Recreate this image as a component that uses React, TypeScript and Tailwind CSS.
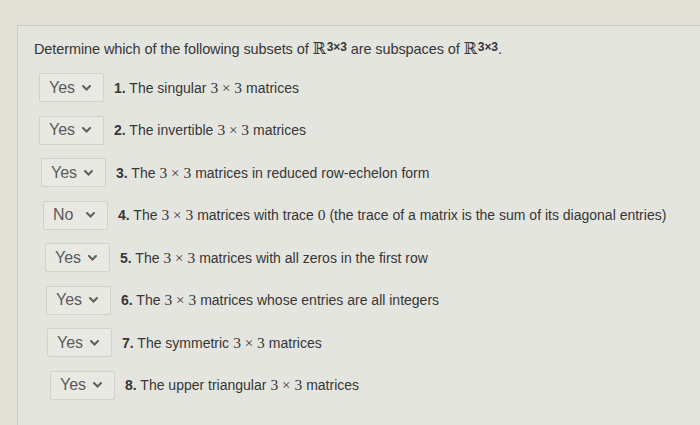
import type { ReactElement, ReactNode } from "react";

type Row = {
  answer: string;
  num: string;
  body: ReactNode;
  shift: string;
};

function Dim(): ReactElement {
  return (
    <span className="font-['Liberation_Serif',serif] text-[15.5px] mx-[4px]">
      3 <span className="text-[15px]">×</span> 3
    </span>
  );
}

function Reals(): ReactElement {
  return (
    <span className="font-['DejaVu_Serif',serif] text-[16px] ml-[4px]">
      ℝ
      <sup className="font-['Liberation_Sans',sans-serif] text-[12px] font-bold relative -top-[3px] ml-[1px]">
        3×3
      </sup>
    </span>
  );
}

const rows: Row[] = [
  { answer: "Yes", num: "1.", shift: "ml-[5px]", body: <>The singular<Dim />matrices</> },
  { answer: "Yes", num: "2.", shift: "ml-[5px]", body: <>The invertible<Dim />matrices</> },
  { answer: "Yes", num: "3.", shift: "ml-[7px]", body: <>The<Dim />matrices in reduced row-echelon form</> },
  {
    answer: "No",
    num: "4.",
    shift: "ml-[9px]",
    body: (
      <>
        The<Dim />matrices with trace{" "}
        <span className="font-['Liberation_Serif',serif] text-[15.5px]">0</span> (the trace of a matrix is the sum of its
        diagonal entries)
      </>
    ),
  },
  { answer: "Yes", num: "5.", shift: "ml-[11px]", body: <>The<Dim />matrices with all zeros in the first row</> },
  { answer: "Yes", num: "6.", shift: "ml-[12px]", body: <>The<Dim />matrices whose entries are all integers</> },
  { answer: "Yes", num: "7.", shift: "ml-[13px]", body: <>The symmetric<Dim />matrices</> },
  { answer: "Yes", num: "8.", shift: "ml-[16px]", body: <>The upper triangular<Dim />matrices</> },
];

function Chevron(): ReactElement {
  return (
    <svg width="9" height="6" viewBox="0 0 9 6" className="shrink-0">
      <path d="M1 1 L4.5 4.5 L8 1" fill="none" stroke="#5e5e5e" strokeWidth="2" strokeLinecap="round" />
    </svg>
  );
}

function AnswerSelect({ value }: { value: string }): ReactElement {
  return (
    <div className="w-[65px] h-[29px] shrink-0 flex items-center justify-between pl-[9px] pr-[12px] border border-[#d2d2ca] bg-[#e9e9e4] rounded-[2px]">
      <span className="text-[16px] text-[#5a5a5a]">{value}</span>
      <Chevron />
    </div>
  );
}

export default function App(): ReactElement {
  return (
    <div className="w-[700px] h-[425px] overflow-hidden bg-[#e3e1d7] pt-[25px] pl-[17px] font-['Liberation_Sans',Arial,sans-serif] text-[#363636]">
      <div className="h-full border-t border-l border-[#cecdc5] bg-[#e5e5e0] pl-[16px] pt-[13px]">
        <p className="text-[14.5px] leading-[20px] tracking-[-0.1px]">
          Determine which of the following subsets of
          <Reals /> are subspaces of
          <Reals />.
        </p>
        <div className="mt-[14px] flex flex-col gap-[13.5px]">
          {rows.map((row) => (
            <div key={row.num} className={`flex items-center gap-[10px] h-[29px] ${row.shift}`}>
              <AnswerSelect value={row.answer} />
              <span className="text-[14px] whitespace-nowrap">
                <b className="font-bold">{row.num}</b> {row.body}
              </span>
            </div>
          ))}
        </div>
      </div>
    </div>
  );
}
